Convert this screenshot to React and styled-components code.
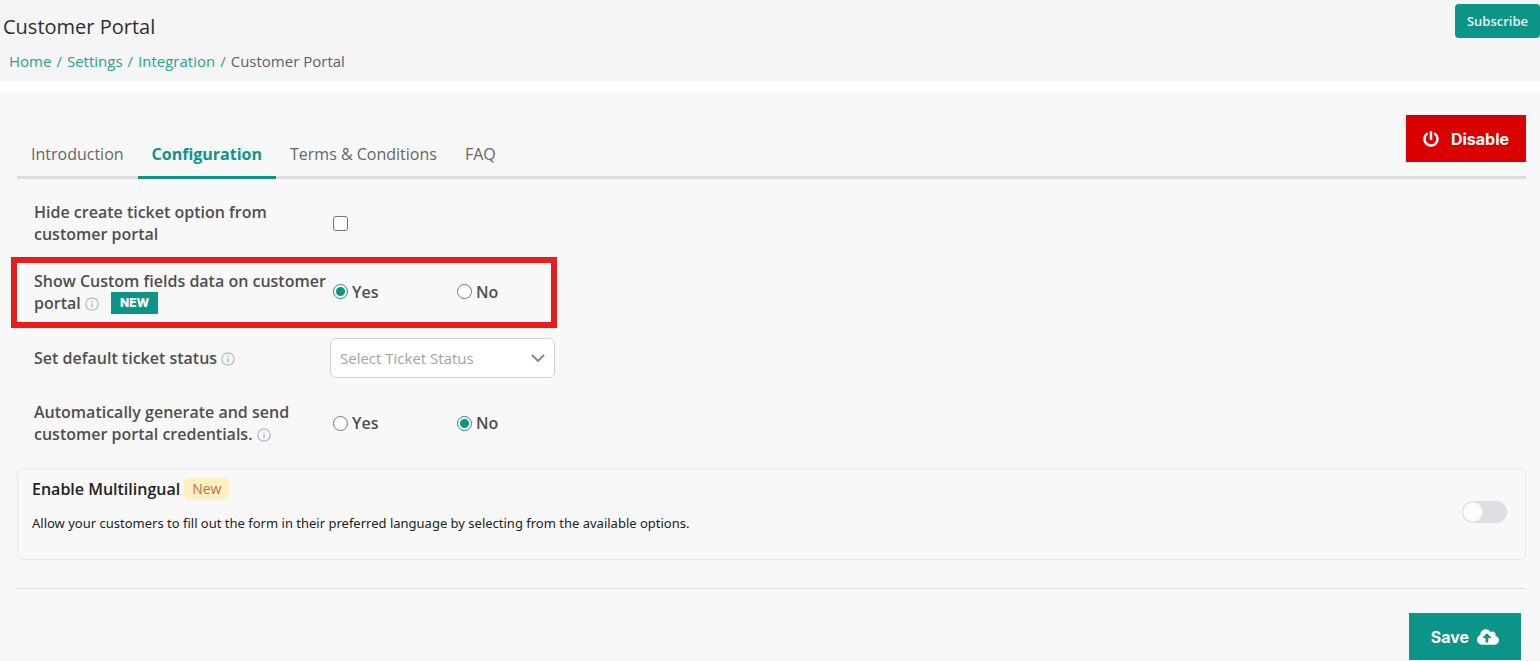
import React, { useState } from 'react'
import styled, { createGlobalStyle } from 'styled-components'
import { FaPowerOff, FaCloudUploadAlt } from 'react-icons/fa'

const teal = '#0d9488'
const text = '#4f4f4f'

const GlobalStyle = createGlobalStyle`
    * {
        box-sizing: border-box;
    }
    body {
        margin: 0;
        background: #fff;
        color: ${text};
        font-family: "Open Sans", "Noto Sans", sans-serif;
        font-size: 16px;
    }
    button, input, select {
        font-family: inherit;
        margin: 0;
    }
`

const Header = styled.header`
    display: flex;
    justify-content: space-between;
    align-items: flex-start;
    padding: 4px 0 8px 3px;
    background: #f5f5f5;
`

const Title = styled.h1`
    margin: 9px 0 8px;
    font-size: 20px;
    line-height: 28px;
    font-weight: 400;
    color: #2f2f2f;
`

const Breadcrumb = styled.nav`
    display: flex;
    gap: 5px;
    padding-left: 6px;
    font-size: 15px;
    line-height: 24px;
    color: #5f5f5f;
    a {
        color: #2ba094;
        text-decoration: none;
    }
    i {
        color: #2ba094;
        font-style: normal;
    }
`

const SubscribeButton = styled.button`
    height: 34px;
    padding: 0 12px;
    border: 0;
    border-radius: 4px;
    background: ${teal};
    color: #e6f6f4;
    font-size: 13px;
    font-weight: 600;
`

const Panel = styled.main`
    margin-top: 11px;
    padding: 23px 14px 1px 17px;
    background: #f8f8f8;
`

const TabBar = styled.div`
    display: flex;
    justify-content: space-between;
    align-items: flex-end;
    border-bottom: 3px solid #dcdcdc;
`

const Tabs = styled.div`
    display: flex;
    margin-bottom: -3px;
`

const Tab = styled.button`
    padding: 0 14px 10px;
    border: 0;
    border-bottom: 3px solid ${props => (props.$active ? teal : 'transparent')};
    background: none;
    color: ${props => (props.$active ? teal : '#666')};
    font-size: 16px;
    line-height: 24px;
    font-weight: ${props => (props.$active ? 700 : 400)};
`

const ActionButton = styled.button`
    display: flex;
    align-items: center;
    gap: ${props => (props.$danger ? 12 : 8)}px;
    height: 47px;
    padding: 0 ${props => (props.$danger ? 17 : 22)}px;
    border: 0;
    background: ${props => (props.$danger ? '#da0000' : teal)};
    color: #fff;
    font-family: Inter, sans-serif;
    font-size: 16px;
    font-weight: 700;
`

const DisableButton = styled(ActionButton)`
    margin-bottom: 14px;
`

const Form = styled.form`
    padding-top: 22px;
`

const Row = styled.div`
    display: grid;
    grid-template-columns: 296px 1fr;
    align-items: center;
    padding-left: 17px;
    margin-bottom: ${props => props.$gap}px;
`

const HighlightRow = styled(Row)`
    width: 546px;
    max-width: 100%;
    height: 71px;
    margin-left: -6px;
    padding-bottom: 2px;
    border: 6px solid #ea1c1c;
`

const Label = styled.div`
    font-size: 16px;
    line-height: 22px;
    font-weight: 600;
`

const InfoIcon = styled.svg`
    width: 14px;
    height: 14px;
    vertical-align: -2px;
`

const NewTag = styled.span`
    display: inline-block;
    vertical-align: top;
    margin-left: 8px;
    padding: 0 9px;
    background: ${teal};
    color: #fff;
    font-family: Inter, sans-serif;
    font-size: 12px;
    line-height: 22px;
    font-weight: 800;
`

const Options = styled.div`
    display: flex;
    padding-left: 3px;
`

const Option = styled.label`
    display: flex;
    align-items: center;
    gap: 4px;
    width: 124px;
    line-height: 22px;
    font-weight: 600;
`

const Radio = styled.input`
    appearance: none;
    width: 15px;
    height: 15px;
    border: 1px solid #767676;
    border-radius: 50%;
    background: #fff;
    &:checked {
        border-color: ${teal};
        background: radial-gradient(circle, ${teal} 4px, #fff 5px);
    }
`

const Checkbox = styled.input`
    appearance: none;
    width: 15px;
    height: 15px;
    border: 1px solid #767676;
    border-radius: 3px;
    background: #fff;
    &:checked {
        background: ${teal};
    }
`

const SelectBox = styled.div`
    display: grid;
    align-items: center;
    width: 225px;
    > * {
        grid-area: 1 / 1;
    }
    svg {
        justify-self: end;
        margin-right: 10px;
        pointer-events: none;
    }
`

const Select = styled.select`
    appearance: none;
    width: 100%;
    height: 40px;
    padding: 0 32px 0 9px;
    border: 1px solid #d1d1d1;
    border-radius: 6px;
    background: #fff;
    color: #a3a3a3;
    font-size: 15px;
`

const Card = styled.section`
    display: flex;
    justify-content: space-between;
    align-items: flex-start;
    min-height: 92px;
    padding: 9px 18px 0 14px;
    border: 1px solid #e6e9e9;
    border-radius: 6px;
`

const CardTitle = styled.h2`
    display: flex;
    align-items: center;
    gap: 4px;
    margin: 0 0 12px;
    color: #222;
    font-size: 16px;
    line-height: 22px;
    font-weight: 600;
`

const SoftTag = styled.span`
    padding: 0 8px;
    border-radius: 3px;
    background: #fef0c3;
    color: #c96f35;
    font-size: 14px;
    font-weight: 400;
`

const CardText = styled.p`
    margin: 0;
    color: #222;
    font-family: "Noto Sans", sans-serif;
    font-size: 13px;
    line-height: 22px;
`

const Switch = styled.input`
    appearance: none;
    flex-shrink: 0;
    width: 45px;
    height: 22px;
    margin-top: 23px;
    border-radius: 11px;
    background: radial-gradient(circle at 11px 11px, #fff 9px, transparent 10px), #dcdee6;
    &:checked {
        background: radial-gradient(circle at 34px 11px, #fff 9px, transparent 10px), ${teal};
    }
`

const Footer = styled.footer`
    display: flex;
    justify-content: flex-end;
    margin-top: 28px;
    padding: 24px 5px 0 0;
    border-top: 1px solid #dfdfdf;
`

const Info = () => (
    <InfoIcon viewBox="0 0 14 14" fill="none" stroke="#a9bccb">
        <circle cx="7" cy="7" r="6.2" strokeWidth="1.2" />
        <path d="M7 6.2v4M7 3.6v1.3" strokeWidth="1.4" />
    </InfoIcon>
)

const YesNo = ({ name, value, onChange, labelledBy }) => (
    <Options role="radiogroup" aria-labelledby={labelledBy}>
        {['Yes', 'No'].map(item => (
            <Option key={item}>
                <Radio type="radio" name={name} checked={value === item} onChange={() => onChange(item)} />
                {item}
            </Option>
        ))}
    </Options>
)

const tabs = ['Introduction', 'Configuration', 'Terms & Conditions', 'FAQ']

const App = () => {
    const [tab, setTab] = useState('Configuration')
    const [customFields, setCustomFields] = useState('Yes')
    const [credentials, setCredentials] = useState('No')

    return (
        <>
            <GlobalStyle />
            <Header>
                <div>
                    <Title>Customer Portal</Title>
                    <Breadcrumb aria-label="Breadcrumb">
                        <a href="#home">Home</a>
                        <i>/</i>
                        <a href="#settings">Settings</a>
                        <i>/</i>
                        <a href="#integration">Integration</a>
                        <i>/</i>
                        <span>Customer Portal</span>
                    </Breadcrumb>
                </div>
                <SubscribeButton type="button">Subscribe</SubscribeButton>
            </Header>
            <Panel>
                <TabBar>
                    <Tabs role="tablist">
                        {tabs.map(name => (
                            <Tab
                                key={name}
                                type="button"
                                role="tab"
                                aria-selected={tab === name}
                                $active={tab === name}
                                onClick={() => setTab(name)}
                            >
                                {name}
                            </Tab>
                        ))}
                    </Tabs>
                    <DisableButton type="button" $danger>
                        <FaPowerOff size={16} />
                        Disable
                    </DisableButton>
                </TabBar>
                <Form onSubmit={e => e.preventDefault()}>
                    <Row $gap={12}>
                        <Label as="label" htmlFor="hide-create">Hide create ticket option from customer portal</Label>
                        <Options>
                            <Checkbox type="checkbox" id="hide-create" />
                        </Options>
                    </Row>
                    <HighlightRow $gap={10}>
                        <Label id="custom-fields">
                            Show Custom fields data on customer portal <Info /> <NewTag>NEW</NewTag>
                        </Label>
                        <YesNo
                            name="customFields"
                            labelledBy="custom-fields"
                            value={customFields}
                            onChange={setCustomFields}
                        />
                    </HighlightRow>
                    <Row $gap={23}>
                        <Label as="label" htmlFor="status">Set default ticket status <Info /></Label>
                        <SelectBox>
                            <Select id="status" defaultValue="">
                                <option value="">Select Ticket Status</option>
                            </Select>
                            <svg width="14" height="8" viewBox="0 0 14 8" fill="none" stroke="#7c8494" strokeWidth="1.8">
                                <path d="M1 1l6 6 6-6" />
                            </svg>
                        </SelectBox>
                    </Row>
                    <Row $gap={23}>
                        <Label id="credentials">
                            Automatically generate and send customer portal credentials. <Info />
                        </Label>
                        <YesNo
                            name="credentials"
                            labelledBy="credentials"
                            value={credentials}
                            onChange={setCredentials}
                        />
                    </Row>
                    <Card>
                        <div>
                            <CardTitle>
                                <label htmlFor="multilingual">Enable Multilingual</label>
                                <SoftTag>New</SoftTag>
                            </CardTitle>
                            <CardText>
                                Allow your customers to fill out the form in their preferred language by selecting from
                                the available options.
                            </CardText>
                        </div>
                        <Switch type="checkbox" role="switch" id="multilingual" />
                    </Card>
                    <Footer>
                        <ActionButton type="submit">
                            Save
                            <FaCloudUploadAlt size={22} />
                        </ActionButton>
                    </Footer>
                </Form>
            </Panel>
        </>
    )
}

export default App
